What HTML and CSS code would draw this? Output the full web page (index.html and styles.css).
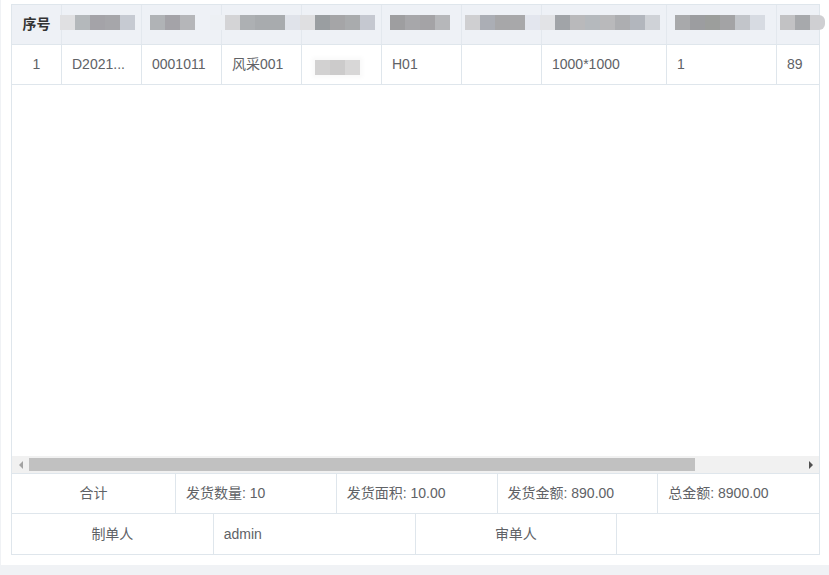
FILE: index.html
```html
<!DOCTYPE html>
<html lang="zh">
<head>
<meta charset="utf-8">
<title>发货单</title>
<link rel="stylesheet" href="styles.css">
</head>
<body>
<div class="panel">
  <div class="grid">
    <div class="viewport">
      <div class="row head">
        <div class="cell center"><b>序号</b></div>
        <div class="cell"></div>
        <div class="cell"></div>
        <div class="cell"></div>
        <div class="cell"></div>
        <div class="cell"></div>
        <div class="cell"></div>
        <div class="cell"></div>
        <div class="cell"></div>
        <div class="cell"></div>
      </div>
      <div class="row body">
        <div class="cell center">1</div>
        <div class="cell">D2021...</div>
        <div class="cell">0001011</div>
        <div class="cell">风采001</div>
        <div class="cell"><span class="blur-cell"></span></div>
        <div class="cell">H01</div>
        <div class="cell"></div>
        <div class="cell">1000*1000</div>
        <div class="cell">1</div>
        <div class="cell">89</div>
      </div>
    </div>
    <div class="hscroll">
      <div class="sb-btn"><span class="arrow-left"></span></div>
      <div class="sb-track"><div class="sb-thumb"></div></div>
      <div class="sb-btn"><span class="arrow-right"></span></div>
    </div>
    <div class="sum-row five">
      <div class="scell center">合计</div>
      <div class="scell">发货数量: 10</div>
      <div class="scell">发货面积: 10.00</div>
      <div class="scell">发货金额: 890.00</div>
      <div class="scell">总金额: 8900.00</div>
    </div>
    <div class="sum-row four">
      <div class="scell center">制单人</div>
      <div class="scell">admin</div>
      <div class="scell center">审单人</div>
      <div class="scell"></div>
    </div>
  </div>
  <div class="mosaic"></div>
</div>
</body>
</html>
```

FILE: styles.css
```css
* { box-sizing: border-box; }
html, body { margin: 0; padding: 0; }
body {
  background: #f0f2f5;
  font-family: "Liberation Sans", "Noto Sans CJK SC", sans-serif;
  font-size: 14px;
  line-height: 16px;
  color: #606266;
  width: 829px;
  height: 575px;
  overflow: hidden;
}
.panel {
  position: relative;
  margin-left: 1px;
  width: 828px;
  height: 565px;
  background: #fff;
  padding: 4px 9px 10px 10px;
}
.grid {
  width: 809px;
  border: 1px solid #dfe6ec;
}
.viewport {
  height: 451px;
  overflow: hidden;
}
.row {
  display: grid;
  grid-template-columns: 50px 80px 80px 80px 80px 80px 80px 125px 110px 100px;
  width: max-content;
  height: 40px;
  border-bottom: 1px solid #dfe6ec;
}
.head { background: #eef1f6; }
.head .cell { border-right-color: #e3e8ee; }
.head b { color: #333; font-weight: bold; }
.cell {
  border-right: 1px solid #dfe6ec;
  padding: 0 10px 1px;
  display: flex;
  align-items: center;
  white-space: nowrap;
  overflow: hidden;
}
.cell.center { justify-content: center; padding: 0 0 1px; }
.blur-cell {
  display: inline-block;
  width: 45px;
  height: 15px;
  margin: 7px 0 0 3px;
  background: linear-gradient(to right, #d2d1d1 0 15px, #cccbcb 15px 30px, #d8d7d7 30px 45px);
  box-shadow: 0 0 4px 3px #fafafa;
}
.hscroll {
  display: flex;
  height: 17px;
  background: #f1f1f1;
}
.sb-btn {
  flex: 0 0 17px;
  display: flex;
  align-items: center;
  justify-content: center;
}
.arrow-left {
  width: 0; height: 0;
  border-top: 4px solid transparent;
  border-bottom: 4px solid transparent;
  border-right: 4px solid #a3a3a3;
}
.arrow-right {
  width: 0; height: 0;
  border-top: 4px solid transparent;
  border-bottom: 4px solid transparent;
  border-left: 4px solid #505050;
}
.sb-track {
  flex: 1;
  display: flex;
  align-items: center;
}
.sb-thumb {
  width: 666px;
  height: 13px;
  background: #c1c1c1;
}
.sum-row {
  display: grid;
  border-top: 1px solid #dfe6ec;
}
.sum-row.five {
  grid-template-columns: 164px repeat(4, 1fr);
  height: 41px;
  border-bottom: 1px solid #dfe6ec;
}
.sum-row.four {
  grid-template-columns: repeat(4, 1fr);
  height: 40px;
  border-top: none;
}
.scell {
  display: flex;
  align-items: center;
  padding: 0 10px 1px;
  border-right: 1px solid #dfe6ec;
  white-space: nowrap;
}
.scell:last-child { border-right: none; }
.scell.center { justify-content: center; }
.mosaic {
  position: absolute;
  left: 59px;
  top: 15px;
  width: 765px;
  height: 15px;
  border-radius: 0 6px 6px 0;
  background: linear-gradient(to right,
    #e0e0e2 0 15px, #b4b8bb 15px 30px, #a4a3a8 30px 45px, #a6a6aa 45px 60px,
    #c6cad2 60px 75px, transparent 75px 90px, #b0b3b6 90px 105px, #a4a3a8 105px 120px,
    #b5b6b9 120px 135px, transparent 135px 150px, #edf0f4 150px 165px, #d4d4d6 165px 180px,
    #adb0b3 180px 195px, #a8abae 195px 225px, #e0e3ea 225px 240px, #dfdfe1 240px 255px,
    #9a9ea1 255px 270px, #a5a5a7 270px 285px, #a9abad 285px 300px, #c5c8d0 300px 315px,
    transparent 315px 330px, #9e9ea0 330px 345px, #a7a7aa 345px 360px, #a4a3a6 360px 375px,
    #b6b7ba 375px 390px, transparent 390px 405px, #cfcfd1 405px 420px, #abaeb5 420px 435px,
    #a7a7a9 435px 450px, #a8a8aa 450px 465px, #e3e6ee 465px 480px, #e2e3e6 480px 495px,
    #a1a4a8 495px 510px, #b9b9bb 510px 525px, #b5b9bd 525px 540px, #b9b9bb 540px 555px,
    #adaeb1 555px 570px, #b2b6bd 570px 585px, #cfd2d7 585px 600px, transparent 600px 615px,
    #a8a9ab 615px 630px, #9c9da0 630px 645px, #9c9e9c 645px 660px, #a3a3a5 660px 675px,
    #c2c5ca 675px 690px, #d7dbe2 690px 705px, transparent 705px 720px, #c2c2c4 720px 735px,
    #a7a9ac 735px 750px, #cfcfd2 750px 765px);
}
```
